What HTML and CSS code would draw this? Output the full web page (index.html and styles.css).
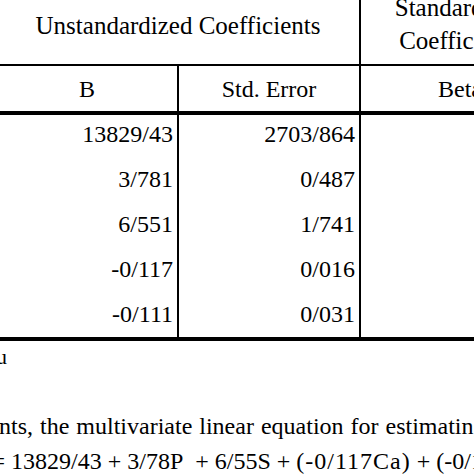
FILE: index.html
```html
<!DOCTYPE html>
<html lang="en">
<head>
<meta charset="utf-8">
<title>Coefficients</title>
<link rel="stylesheet" href="styles.css">
</head>
<body>
<div class="page">
  <div class="coef-table">
    <div class="cell head-top span-2">Unstandardized Coefficients</div>
    <div class="cell head-top">Standardized Coefficients</div>
    <div class="cell head-sub ruled">B</div>
    <div class="cell head-sub ruled">Std. Error</div>
    <div class="cell head-sub">Beta</div>

    <div class="cell num ruled">13829/43</div>
    <div class="cell num ruled">2703/864</div>
    <div class="cell num"></div>

    <div class="cell num ruled">3/781</div>
    <div class="cell num ruled">0/487</div>
    <div class="cell num"></div>

    <div class="cell num ruled">6/551</div>
    <div class="cell num ruled">1/741</div>
    <div class="cell num"></div>

    <div class="cell num ruled">-0/117</div>
    <div class="cell num ruled">0/016</div>
    <div class="cell num"></div>

    <div class="cell num ruled last">-0/111</div>
    <div class="cell num ruled last">0/031</div>
    <div class="cell num last"></div>
  </div>
  <p class="note">u</p>
  <p class="para">
    <span class="line first">nts, the multivariate linear equation for estimating</span>
    <span class="line eq">= 13829/43 + 3/78P&nbsp; + 6/55S + <span class="term">(-0/117Ca)</span> + (-0/111Mg)</span>
  </p>
</div>
</body>
</html>
```

FILE: styles.css
```css
html, body {
  margin: 0;
  padding: 0;
  background: #fff;
  overflow: hidden;
}

body {
  font-family: "Liberation Serif", "Times New Roman", serif;
  color: #000;
}

.page {
  width: 474px;
  height: 474px;
  overflow: hidden;
}

.coef-table {
  display: grid;
  grid-template-columns: 182px 182px 198px;
  grid-template-rows: 81px 49px 45px 45px 45px 45px 46px;
  margin: -15px 0 0 -3px;
  font-size: 24px;
}

.cell {
  box-sizing: border-box;
}

.head-top {
  display: flex;
  align-items: center;
  justify-content: center;
  text-align: center;
  font-size: 25px;
  line-height: 32.6px;
  border-bottom: 2px solid #000;
}

.span-2 {
  grid-column: span 2;
  border-right: 2px solid #000;
  padding-top: 3px;
}

.head-sub {
  display: flex;
  align-items: center;
  justify-content: center;
  line-height: 28px;
  border-bottom: 4px solid #000;
}

.ruled {
  border-right: 2px solid #000;
}

.num {
  text-align: right;
  line-height: 28px;
  padding: 5px 4px 0 0;
}

.last {
  border-bottom: 4px solid #000;
}

.note {
  margin: 2px 0 0 -4px;
  font-size: 22px;
  line-height: 28px;
}

.para {
  margin: 38px 0 0;
  font-size: 24px;
  line-height: 35px;
  white-space: nowrap;
}

.line {
  display: block;
}

.first {
  margin-left: -1px;
  word-spacing: 1px;
}

.eq {
  margin-left: -8.5px;
}

.term {
  letter-spacing: 1px;
}
```
